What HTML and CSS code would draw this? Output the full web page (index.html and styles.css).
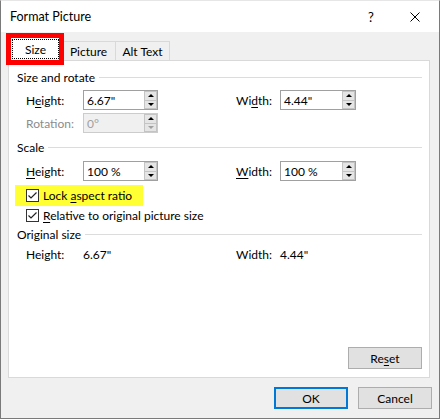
FILE: index.html
```html
<!DOCTYPE html>
<html>
<head>
<meta charset="utf-8">
<link rel="stylesheet" href="styles.css">
</head>
<body>
<div class="window">
  <div class="titlebar">
    <span class="title">Format Picture</span>
    <span class="tbtn help">?</span>
    <span class="tbtn close"><svg width="10" height="10" viewBox="0 0 10 10"><path d="M0.5 0.5L9.5 9.5M9.5 0.5L0.5 9.5" stroke="#000" stroke-width="1" fill="none"/></svg></span>
  </div>
  <div class="tabs">
    <div class="tab sel"><span class="focus">Size</span></div>
    <div class="tab t-pic">Picture</div>
    <div class="tab t-alt">Alt Text</div>
  </div>
  <div class="panel">
    <div class="group"><span>Size and rotate</span></div>
    <div class="row first">
      <span>H<u>e</u>ight:</span>
      <div class="spin"><span class="val">6.67"</span><div class="btns"><b class="up"></b><b class="dn"></b></div></div>
      <span></span>
      <span>Wi<u>d</u>th:</span>
      <div class="spin wide"><span class="val">4.44"</span><div class="btns"><b class="up"></b><b class="dn"></b></div></div>
    </div>
    <div class="row second">
      <span class="dis">Rotation:</span>
      <div class="spin disabled"><span class="val">0°</span><div class="btns"><b class="up"></b><b class="dn"></b></div></div>
    </div>
    <div class="group g2"><span>Scale</span></div>
    <div class="row third">
      <span><u>H</u>eight:</span>
      <div class="spin"><span class="val">100 %</span><div class="btns"><b class="up"></b><b class="dn"></b></div></div>
      <span></span>
      <span><u>W</u>idth:</span>
      <div class="spin wide"><span class="val">100 %</span><div class="btns"><b class="up"></b><b class="dn"></b></div></div>
    </div>
    <div class="check lock"><span class="box"><svg width="11" height="11" viewBox="0 0 11 11"><path d="M1.5 5.5L4 8L9.5 2.5" stroke="#222" stroke-width="1.2" fill="none"/></svg></span><span>Lock <u>a</u>spect ratio</span></div>
    <div class="check rel"><span class="box"><svg width="11" height="11" viewBox="0 0 11 11"><path d="M1.5 5.5L4 8L9.5 2.5" stroke="#222" stroke-width="1.2" fill="none"/></svg></span><span><u>R</u>elative to original picture size</span></div>
    <div class="group g3"><span>Original size</span></div>
    <div class="row orig">
      <span>Height:</span>
      <span>6.67"</span>
      <span></span>
      <span>Width:</span>
      <span>4.44"</span>
    </div>
    <div class="btn reset">Re<u>s</u>et</div>
  </div>
  <div class="footer">
    <div class="btn ok">OK</div>
    <div class="btn">Cancel</div>
  </div>
</div>
</body>
</html>
```
FILE: styles.css
```css
html, body {
  margin: 0;
  padding: 0;
  background: #f0f0f0;
}
body {
  font-family: "Segoe UI", Lato, "Noto Sans", sans-serif;
  font-size: 12px;
  color: #000;
}
u { text-decoration: underline; text-underline-offset: 2px; }

.window {
  width: 440px;
  height: 419px;
  box-sizing: border-box;
  border: 1px solid #7a7a7a;
  border-top-color: #e6e6e6;
  background: #f0f0f0;
}

.titlebar {
  height: 31px;
  background: #fff;
  display: flex;
  align-items: center;
}
.title {
  flex: 1;
  padding-left: 9px;
  font-size: 12.5px;
}
.tbtn {
  width: 46px;
  height: 31px;
  display: flex;
  align-items: center;
  justify-content: center;
}
.help { font-size: 13px; padding-left: 4px; box-sizing: border-box; }
.close { margin-right: 1px; }
.close svg { display: block; }

.tabs {
  height: 28px;
  display: flex;
  align-items: flex-end;
  padding-left: 10px;
}
.tab {
  height: 19px;
  box-sizing: border-box;
  border: 1px solid #d9d9d9;
  border-bottom: none;
  background: #f0f0f0;
  display: flex;
  align-items: center;
  justify-content: center;
}
.t-pic { width: 54px; margin-left: 2px; border-right: none; }
.t-alt { width: 55px; }
.tab.sel {
  width: 48px;
  height: 22px;
  background: #fff;
  border: none;
  padding: 1px 0 1px 1px;
  outline: 5px solid #ff0000;
  position: relative;
  z-index: 1;
  align-items: stretch;
}
.focus {
  flex: 1;
  border: 1px dotted #000;
  display: flex;
  align-items: center;
  justify-content: center;
}

.panel {
  margin-left: 7px;
  width: 422px;
  height: 318px;
  box-sizing: border-box;
  border: 1px solid #d9d9d9;
  background: #fff;
  display: flex;
  flex-direction: column;
  padding: 0 7px 0 8px;
}

.group {
  height: 16px;
  display: flex;
  align-items: center;
  gap: 4px;
  margin-top: 8px;
}
.group::after {
  content: "";
  flex: 1;
  height: 1px;
  background: #dcdcdc;
}
.g2 { margin-top: 6px; }
.g3 { margin-top: 3px; }

.row {
  display: grid;
  grid-template-columns: 57px 75px 78px 44px 76px;
  align-items: center;
  height: 20px;
  padding-left: 9px;
}
.row.first { margin-top: 5px; }
.row.second { margin-top: 3px; }
.row.third { margin-top: 6px; }
.row.orig { height: 16px; margin-top: 4px; }
.dis { color: #8c8c8c; }

.spin {
  height: 20px;
  box-sizing: border-box;
  border: 1px solid #a0a0a0;
  background: #fff;
  display: flex;
}
.val {
  flex: 1;
  padding-left: 3px;
  display: flex;
  align-items: center;
}
.btns {
  width: 13px;
  display: flex;
  flex-direction: column;
}
.btns b {
  flex: 1;
  background: #e5e5e5;
  border: 1px solid #c4c4c4;
  display: flex;
  align-items: center;
  justify-content: center;
}
.btns b + b { border-top: none; }
.btns b::before {
  content: "";
  width: 0;
  height: 0;
  border-left: 3px solid transparent;
  border-right: 3px solid transparent;
}
.btns .up::before { border-bottom: 3px solid #000; }
.btns .dn::before { border-top: 3px solid #000; }
.spin.disabled { border-color: #cccccc; background: #f0f0f0; }
.spin.disabled .val { color: #a0a0a0; }
.spin.disabled .dn::before { border-top-color: #a0a0a0; }

.check {
  display: flex;
  align-items: center;
  gap: 4px;
}
.box {
  width: 13px;
  height: 13px;
  box-sizing: border-box;
  border: 1px solid #333;
  background: #fff;
  display: flex;
  align-items: center;
  justify-content: center;
}
.box svg { display: block; }
.lock {
  margin-top: 4px;
  margin-left: -2px;
  height: 21px;
  padding: 0 11px 0 11px;
  background: #ffff33;
  align-self: flex-start;
}
.rel {
  margin-top: 1px;
  height: 16px;
  padding-left: 9px;
}

.btn {
  width: 74px;
  height: 22px;
  box-sizing: border-box;
  border: 1px solid #adadad;
  background: #e1e1e1;
  display: flex;
  align-items: center;
  justify-content: center;
}
.reset {
  margin-top: auto;
  margin-bottom: 8px;
  align-self: flex-end;
}
.footer {
  display: flex;
  justify-content: flex-end;
  gap: 10px;
  padding: 9px 7px 0 0;
}
.btn.ok { border: 2px solid #0078d7; }
```
